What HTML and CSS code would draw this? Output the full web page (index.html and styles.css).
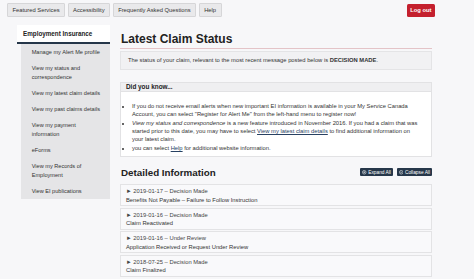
FILE: index.html
```html
<!DOCTYPE html>
<html lang="en">
<head>
  <meta charset="UTF-8" />
  <title>Latest Claim Status</title>
  <link rel="stylesheet" href="styles.css">
</head>
<body>
  <div class="topbar">
    <a class="nav-btn" href="#">Featured Services</a>
    <a class="nav-btn" href="#">Accessibility</a>
    <a class="nav-btn" href="#">Frequently Asked Questions</a>
    <a class="nav-btn" href="#">Help</a>
    <a class="logout-btn" href="#">Log out</a>
  </div>

  <div class="layout">
    <div class="sidebar">
      <div class="sidebar-title">Employment Insurance</div>
      <ul class="side-menu">
        <li>Manage my Alert Me profile</li>
        <li>View my status and correspondence</li>
        <li>View my latest claim details</li>
        <li>View my past claims details</li>
        <li>View my payment information</li>
        <li>eForms</li>
        <li>View my Records of Employment</li>
        <li>View EI publications</li>
      </ul>
    </div>

    <div class="main">
      <h1>Latest Claim Status</h1>
      <div class="status-box">
        The status of your claim, relevant to the most recent message posted below is <strong>DECISION MADE</strong>.
      </div>

      <div class="panel">
        <div class="panel-head">Did you know...</div>
        <ul class="panel-body">
          <li>If you do not receive email alerts when new important EI information is available in your My Service Canada Account, you can select "Register for Alert Me" from the left-hand menu to register now!</li>
          <li><em>View my status and correspondence</em> is a new feature introduced in November 2016. If you had a claim that was started prior to this date, you may have to select <a href="#">View my latest claim details</a> to find additional information on your latest claim.</li>
          <li>you can select <a href="#">Help</a> for additional website information.</li>
        </ul>
      </div>

      <div class="detail-head">
        <h2>Detailed Information</h2>
        <div class="detail-actions">
          <button class="small-btn">
            <svg viewBox="0 0 10 10"><circle cx="5" cy="5" r="4" fill="none" stroke="#fff" stroke-width="1.2"/><path d="M5 3v4M3 5h4" stroke="#fff" stroke-width="1.2"/></svg>
            Expand All
          </button>
          <button class="small-btn">
            <svg viewBox="0 0 10 10"><circle cx="5" cy="5" r="4" fill="none" stroke="#fff" stroke-width="1.2"/><path d="M3 5h4" stroke="#fff" stroke-width="1.2"/></svg>
            Collapse All
          </button>
        </div>
      </div>

      <div class="entry">
        <div class="entry-title">&#9658; 2019-01-17 – Decision Made</div>
        <div>Benefits Not Payable – Failure to Follow Instruction</div>
      </div>
      <div class="entry">
        <div class="entry-title">&#9658; 2019-01-16 – Decision Made</div>
        <div>Claim Reactivated</div>
      </div>
      <div class="entry">
        <div class="entry-title">&#9658; 2019-01-16 – Under Review</div>
        <div>Application Received or Request Under Review</div>
      </div>
      <div class="entry">
        <div class="entry-title">&#9658; 2018-07-25 – Decision Made</div>
        <div>Claim Finalized</div>
      </div>
    </div>
  </div>
</body>
</html>
```

FILE: styles.css
```css
body {
  margin: 0;
  background-color: #f7f7f9;
  color: #333;
  font-family: "Liberation Sans", Arial, sans-serif;
  font-size: 5.8px;
  line-height: 7.5px;
}

a {
  color: #284162;
}

.topbar {
  display: flex;
  align-items: flex-start;
  gap: 2.5px;
  padding: 3px 39px 0 7px;
}

.nav-btn {
  display: block;
  height: 12px;
  line-height: 12px;
  padding: 0 4.5px;
  background-color: #e9e9eb;
  border: 1px solid #d6d6d8;
  border-radius: 1px;
  color: #333;
  text-decoration: none;
}

.logout-btn {
  margin-left: auto;
  margin-top: 1px;
  height: 13px;
  line-height: 13px;
  padding: 0 3.5px;
  background-color: #c4202e;
  border-radius: 1.5px;
  color: #fff;
  font-weight: bold;
  text-decoration: none;
}

.layout {
  display: flex;
  gap: 10px;
  padding-left: 17px;
  margin-top: 8px;
}

.sidebar {
  width: 93px;
  flex-shrink: 0;
}

.sidebar-title {
  height: 17px;
  line-height: 17px;
  padding-left: 6px;
  background-color: #fff;
  border-bottom: 2px solid #26374a;
  font-size: 6.3px;
  font-weight: bold;
  color: #222;
}

.side-menu {
  list-style: none;
  margin: 0 0 0 3.7px;
  padding: 0;
  background-color: #e5e5e7;
  font-size: 5.6px;
}

.side-menu li {
  padding: 3.5px 6px 3.5px 11px;
  line-height: 9px;
}

.main {
  width: 312px;
}

h1 {
  margin: 0;
  padding: 6.6px 0 2.4px 1px;
  font-size: 12px;
  line-height: 14px;
  color: #222;
  border-bottom: 1px solid #e4c4c8;
}

.status-box {
  margin-top: 2px;
  padding: 5.5px 7px 4px;
  background-color: #f1f1f3;
  border: 1px solid #e4e4e6;
}

.panel {
  margin-top: 12px;
  border: 1px solid #e2e2e4;
  background-color: #fff;
}

.panel-head {
  height: 8px;
  line-height: 8px;
  padding: 0 5px;
  background-color: #efeff1;
  border-bottom: 1px solid #e2e2e4;
  font-size: 6.4px;
  font-weight: bold;
  color: #222;
}

.panel-body {
  margin: 0;
  padding: 11.4px 12px 2px 11px;
  line-height: 7.7px;
}

.panel-body li {
  margin-bottom: 1.6px;
}

.detail-head {
  display: flex;
  align-items: center;
  justify-content: space-between;
  height: 14px;
  margin-top: 8px;
}

h2 {
  margin: 0;
  padding-left: 1px;
  font-size: 9.8px;
  color: #222;
}

.detail-actions {
  display: flex;
  gap: 4px;
}

.small-btn {
  display: flex;
  align-items: center;
  gap: 1.5px;
  height: 8px;
  padding: 0 2px;
  border: none;
  border-radius: 1px;
  background-color: #26374a;
  color: #fff;
  font-family: inherit;
  font-size: 4.8px;
}

.small-btn svg {
  width: 4.5px;
  height: 4.5px;
}

.entry {
  margin-top: 1.5px;
  padding: 2px 5px 1px;
  line-height: 8.5px;
  background-color: #f9f9fb;
  border: 1px solid #e3e3e5;
}

.detail-head + .entry {
  margin-top: 5px;
}

.entry-title {
  color: #444;
}
```
